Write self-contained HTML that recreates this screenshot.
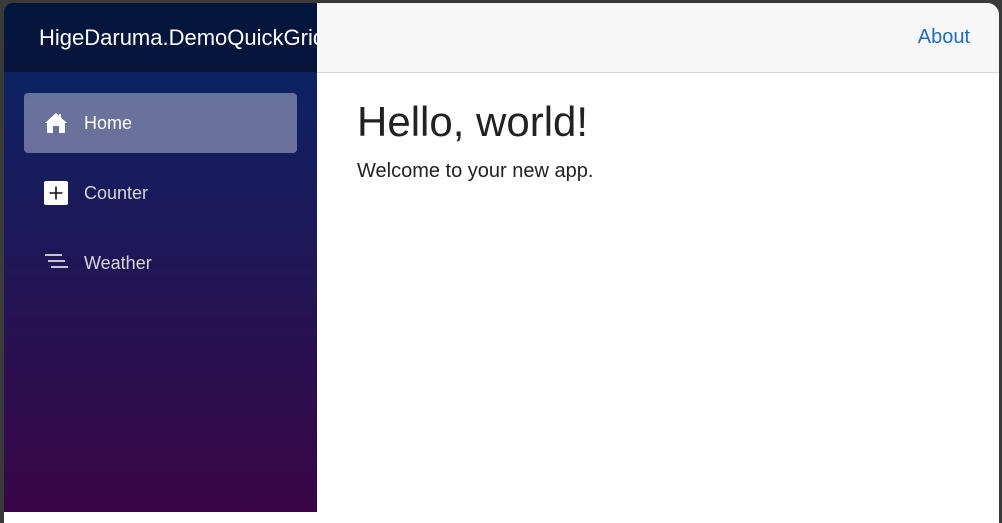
<!DOCTYPE html>
<html><head><style>
html,body{margin:0;padding:0;width:1002px;height:512px;overflow:hidden;background:#3a3a3a;font-family:"Liberation Sans",Arial,sans-serif}
.win{position:absolute;left:4px;top:3px;width:995px;height:520px;border-radius:8px 12px 0 0;overflow:hidden;background:#fff}
.side{position:absolute;left:0;top:0;width:313px;height:509px;background:linear-gradient(180deg,#052767 0%,#3a0647 100%)}
.brand{position:absolute;left:0;top:0;width:313px;height:69px;background:rgba(0,0,0,0.4);color:#fff;font-size:22px;line-height:70px;padding-left:35px;box-sizing:border-box;white-space:nowrap;overflow:hidden}
.nav{position:absolute;left:20px;width:273px;height:60px;border-radius:4px;color:#d7d7d7;font-size:18px;line-height:60px;box-sizing:border-box;padding-left:60px}
.nav.active{background:rgba(255,255,255,0.37);color:#fff}
.nav svg{position:absolute;left:20px;top:18px}
.top{position:absolute;left:313px;top:0;right:0;height:69px;background:#f7f7f7;border-bottom:1px solid #d6d5d5}
.top a{position:absolute;right:29px;top:23px;color:#1b6ec2;font-size:20px;text-decoration:none}
h1{position:absolute;left:353px;top:95px;margin:0;font-weight:normal;font-size:42px;color:#222}
p{position:absolute;left:353px;top:157px;margin:0;font-size:20px;color:#222}
</style></head><body>
<div class="win">
<div class="side">
<div class="brand">HigeDaruma.DemoQuickGrid</div>
<div class="nav active" style="top:90px"><svg width="24" height="24" viewBox="0 0 24 24"><path d="M12 2 L1 12 H3 V22 H9 V15 H15 V22 H21 V12 H23 L17 6.5 V3 H15 V4.7 Z" fill="#fff"/></svg>Home</div>
<div class="nav" style="top:160px"><svg width="24" height="24" viewBox="0 0 24 24"><rect x="0" y="0" width="24" height="24" rx="2" fill="#fff"/><path d="M12 5.5V18.5M5.5 12H18.5" stroke="#111" stroke-width="1.6"/></svg>Counter</div>
<div class="nav" style="top:230px"><svg width="24" height="24" viewBox="0 0 24 24"><path d="M1 4H18M4 10H21M7 16H24" stroke="#fff" stroke-width="1.5"/></svg>Weather</div>
</div>
<div class="top"><a>About</a></div>
<h1>Hello, world!</h1>
<p>Welcome to your new app.</p>
</div>
</body></html>
